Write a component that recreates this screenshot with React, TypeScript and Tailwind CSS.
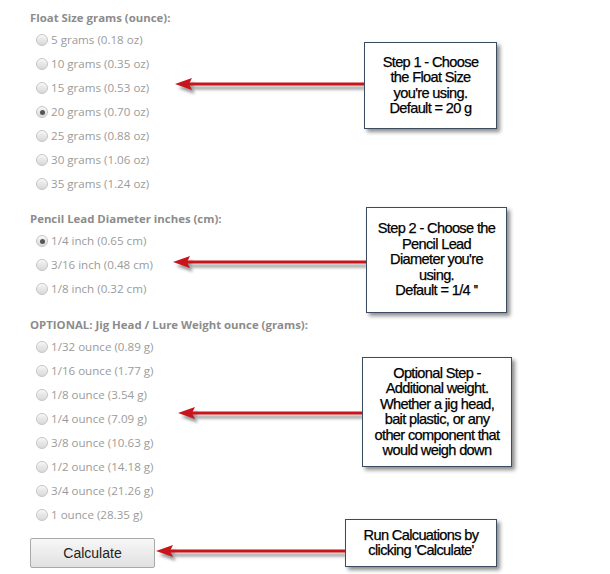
import type { ReactNode } from "react";

const FLOATS = [
  "5 grams (0.18 oz)",
  "10 grams (0.35 oz)",
  "15 grams (0.53 oz)",
  "20 grams (0.70 oz)",
  "25 grams (0.88 oz)",
  "30 grams (1.06 oz)",
  "35 grams (1.24 oz)",
];

const LEADS = ["1/4 inch (0.65 cm)", "3/16 inch (0.48 cm)", "1/8 inch (0.32 cm)"];

const WEIGHTS = [
  "1/32 ounce (0.89 g)",
  "1/16 ounce (1.77 g)",
  "1/8 ounce (3.54 g)",
  "1/4 ounce (7.09 g)",
  "3/8 ounce (10.63 g)",
  "1/2 ounce (14.18 g)",
  "3/4 ounce (21.26 g)",
  "1 ounce (28.35 g)",
];

// callout boxes and their arrows, in page coordinates
const CALLOUTS: {
  box: { left: number; top: number; width: number; height: number };
  tip: number;
  y: number;
  lines: string[];
}[] = [
  {
    box: { left: 364, top: 42, width: 133, height: 87 },
    tip: 175,
    y: 84,
    lines: ["Step 1 - Choose", "the Float Size", "you're using.", "Default = 20 g"],
  },
  {
    box: { left: 366, top: 207, width: 141, height: 106 },
    tip: 173,
    y: 262,
    lines: ["Step 2 - Choose the", "Pencil Lead", "Diameter you're", "using.", "Default = 1/4 ''"],
  },
  {
    box: { left: 362, top: 357, width: 150, height: 110 },
    tip: 178,
    y: 413,
    lines: [
      "Optional Step -",
      "Additional weight.",
      "Whether a jig head,",
      "bait plastic, or any",
      "other component that",
      "would weigh down",
    ],
  },
  {
    box: { left: 345, top: 519, width: 152, height: 48 },
    tip: 156,
    y: 551,
    lines: ["Run Calcuations by", "clicking 'Calculate'"],
  },
];

function Radio({ checked, label }: { checked?: boolean; label: string }) {
  return (
    <label className="flex h-6 items-center">
      <span className="mr-[3px] flex h-3 w-3 items-center justify-center rounded-full border border-[#c4c4c4] bg-gradient-to-b from-[#f4f4f4] to-[#d9d9d9] shadow-[inset_0_1px_1px_rgba(255,255,255,0.8)]">
        {checked && <span className="h-[5px] w-[5px] rounded-full bg-[#555]" />}
      </span>
      <span className="text-[11.6px] text-[#9b9b9b]">{label}</span>
    </label>
  );
}

function Group({ title, className, children }: { title: string; className?: string; children: ReactNode }) {
  return (
    <div className={className}>
      <div className="h-5 text-[11.4px] font-bold leading-5 text-[#8c8c8c]">{title}</div>
      <div className="pl-[6px]">{children}</div>
    </div>
  );
}

function Arrow({ tip, end, y }: { tip: number; end: number; y: number }) {
  const w = end - tip;
  return (
    <svg
      className="pointer-events-none absolute"
      style={{ left: tip - 2, top: y - 10 }}
      width={w + 4}
      height={22}
      viewBox={`0 0 ${w + 4} 22`}
    >
      <defs>
        <filter id={`sh${y}`} x="-5%" y="-50%" width="110%" height="200%">
          <feGaussianBlur stdDeviation="1.6" />
        </filter>
      </defs>
      <g transform="translate(3 4)" opacity="0.4" filter={`url(#sh${y})`}>
        <rect x="14" y="8.5" width={w - 14} height="3" fill="#000" />
        <path d="M2 10 L19 4 L16 10 L19 16 Z" fill="#000" />
      </g>
      <rect x="14" y="8.5" width={w - 12} height="3" fill="#c8141b" />
      <path d="M2 10 L19 4 L16 10 L19 16 Z" fill="#c8141b" />
    </svg>
  );
}

export default function App() {
  return (
    <div className="relative h-[574px] w-[610px] overflow-hidden bg-white font-['Open_Sans',sans-serif]">
      <div className="pl-[30px] pt-2">
        <Group title="Float Size grams (ounce):">
          {FLOATS.map((f, i) => (
            <Radio key={f} label={f} checked={i === 3} />
          ))}
        </Group>
        <Group title="Pencil Lead Diameter inches (cm):" className="mt-[13px]">
          {LEADS.map((l, i) => (
            <Radio key={l} label={l} checked={i === 0} />
          ))}
        </Group>
        <Group title="OPTIONAL: Jig Head / Lure Weight ounce (grams):" className="mt-[14px]">
          {WEIGHTS.map((w) => (
            <Radio key={w} label={w} />
          ))}
        </Group>
        <button className="mt-[11px] h-[30px] w-[125px] rounded-[2px] border border-[#a9a9a9] bg-gradient-to-b from-[#f7f7f7] to-[#e1e1e1] font-['Liberation_Sans',Arial,sans-serif] text-[14px] text-[#222]">
          Calculate
        </button>
      </div>

      {CALLOUTS.map((c) => (
        <div key={c.y}>
          <Arrow tip={c.tip} end={c.box.left} y={c.y} />
          <div
            className="absolute flex flex-col items-center justify-center border border-[#3c4c60] bg-white text-center font-['Liberation_Sans',Arial,sans-serif] text-[14.6px] leading-[15.5px] tracking-[-0.65px] text-black shadow-[3px_3px_4px_rgba(0,0,0,0.45)] [-webkit-text-stroke:0.25px_#000]"
            style={c.box}
          >
            {c.lines.map((l) => (
              <div key={l}>{l}</div>
            ))}
          </div>
        </div>
      ))}
    </div>
  );
}
